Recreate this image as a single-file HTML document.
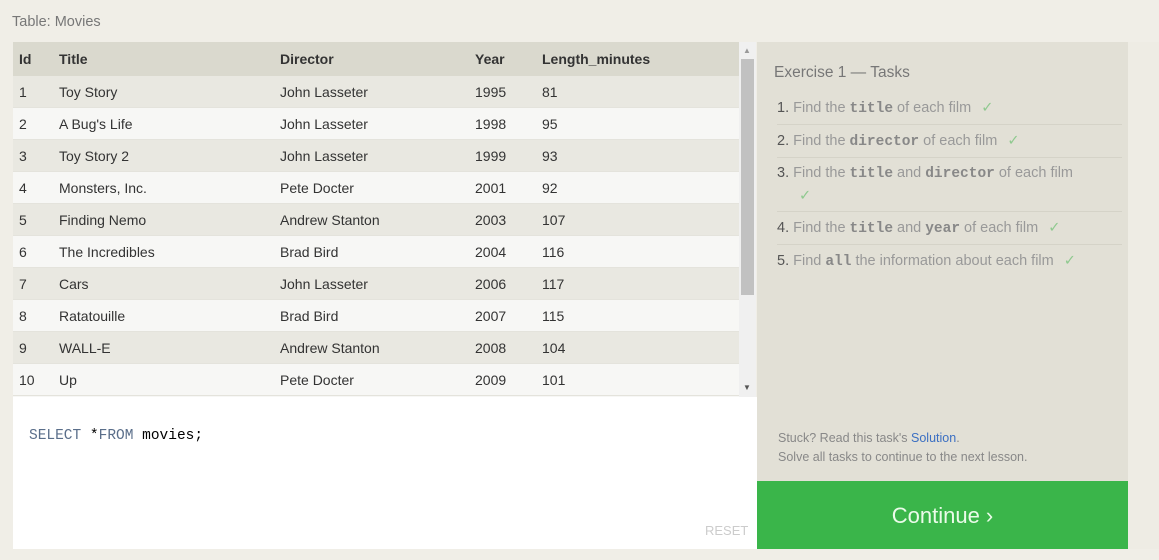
<!DOCTYPE html>
<html><head><style>
body{margin:0;width:1159px;height:560px;background:#f0eee7;font-family:"Liberation Sans",sans-serif;position:relative;overflow:hidden;color:#333}
.abs{position:absolute}
table{border-collapse:collapse;width:726px;font-size:14px}
td,th{height:31px;padding:0;text-align:left;border-bottom:1px solid #e4e3dc}
th{height:34px;border:none;background:#dad9ce;font-weight:bold;color:#333}
tr:nth-child(even) td{background:#e9e8e1}
tr:nth-child(odd) td{background:#f7f7f5}
.c1{padding-left:6px;width:40px}.c2{width:221px}.c3{width:195px}.c4{width:67px}
li{margin:0;padding:8px 0 7px;border-bottom:1px solid #d5d3c8;font-size:14.5px;color:#999}
code{font-family:"Liberation Mono",monospace;font-weight:bold;color:#888;margin:0 4px}
.ck{color:#8fc98f;margin-left:6px}
</style></head><body>
<div class="abs" style="left:12px;top:14px;font-size:14.5px;color:#777">Table: Movies</div>
<div class="abs" style="left:13px;top:42px;width:726px;height:355px;overflow:hidden;background:#f7f7f5">
<table>
<tr><th class="c1">Id</th><th class="c2" style="padding-left:0">Title</th><th class="c3">Director</th><th class="c4">Year</th><th>Length_minutes</th></tr>
<tr><td class="c1">1</td><td>Toy Story</td><td>John Lasseter</td><td>1995</td><td>81</td></tr>
<tr><td class="c1">2</td><td>A Bug's Life</td><td>John Lasseter</td><td>1998</td><td>95</td></tr>
<tr><td class="c1">3</td><td>Toy Story 2</td><td>John Lasseter</td><td>1999</td><td>93</td></tr>
<tr><td class="c1">4</td><td>Monsters, Inc.</td><td>Pete Docter</td><td>2001</td><td>92</td></tr>
<tr><td class="c1">5</td><td>Finding Nemo</td><td>Andrew Stanton</td><td>2003</td><td>107</td></tr>
<tr><td class="c1">6</td><td>The Incredibles</td><td>Brad Bird</td><td>2004</td><td>116</td></tr>
<tr><td class="c1">7</td><td>Cars</td><td>John Lasseter</td><td>2006</td><td>117</td></tr>
<tr><td class="c1">8</td><td>Ratatouille</td><td>Brad Bird</td><td>2007</td><td>115</td></tr>
<tr><td class="c1">9</td><td>WALL-E</td><td>Andrew Stanton</td><td>2008</td><td>104</td></tr>
<tr><td class="c1">10</td><td>Up</td><td>Pete Docter</td><td>2009</td><td>101</td></tr>
</table></div>
<div class="abs" style="left:739px;top:42px;width:17px;height:355px;background:#f0f0f0"></div>
<div class="abs" style="left:741px;top:59px;width:13px;height:236px;background:#c1c1c1"></div>
<div class="abs" style="left:743px;top:46px;font-size:8px;color:#999">▲</div>
<div class="abs" style="left:743px;top:383px;font-size:8px;color:#555">▼</div>
<div class="abs" style="left:13px;top:397px;width:744px;height:152px;background:#fff"></div>
<div class="abs" style="left:29px;top:428px;font-family:'Liberation Mono',monospace;font-size:14.5px;color:#000"><span style="color:#5a6e8a">SELECT</span> *<span style="color:#5a6e8a">FROM</span> movies;</div>
<div class="abs" style="left:705px;top:523px;font-size:13px;color:#ccc">RESET</div>
<div class="abs" style="left:757px;top:42px;width:371px;height:439px;background:#e2e0d6"></div>
<div class="abs" style="left:1128px;top:42px;width:31px;height:507px;background:#eeece4"></div>
<div class="abs" style="left:774px;top:64px;font-size:15.5px;color:#777">Exercise 1 — Tasks</div>
<ol class="abs" style="left:777px;top:92px;width:345px;margin:0;padding:0;list-style:none">
<li><span style="color:#555">1.</span> Find the<code>title</code>of each film <span class="ck">✓</span></li>
<li><span style="color:#555">2.</span> Find the<code>director</code>of each film <span class="ck">✓</span></li>
<li style="line-height:22px;padding:4px 0"><span style="color:#555">3.</span> Find the<code>title</code>and<code>director</code>of each film<br><span class="ck" style="margin-left:22px">✓</span></li>
<li><span style="color:#555">4.</span> Find the<code>title</code>and<code>year</code>of each film <span class="ck">✓</span></li>
<li style="border:none"><span style="color:#555">5.</span> Find<code>all</code>the information about each film <span class="ck">✓</span></li>
</ol>
<div class="abs" style="left:778px;top:429px;font-size:12.5px;color:#888;line-height:19px">Stuck? Read this task's <span style="color:#3b6fc2">Solution</span>.<br>Solve all tasks to continue to the next lesson.</div>
<div class="abs" style="left:757px;top:481px;width:371px;height:68px;background:#3ab54a;color:#eafbe9;font-size:22px;text-align:center;line-height:70px">Continue ›</div>
</body></html>
